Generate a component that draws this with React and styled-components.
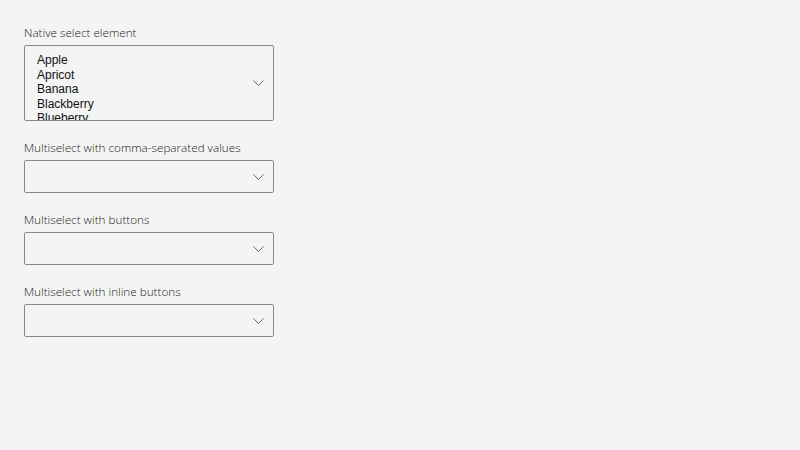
import React from "react";
import styled, { createGlobalStyle } from "styled-components";

const Global = createGlobalStyle`
  html, body { margin: 0; padding: 0; background: #f4f4f4; }
  body { font-family: "Open Sans", "Liberation Sans", sans-serif; }
`;

const Page = styled.div`
  display: flex;
  flex-direction: column;
  gap: 20px;
  padding: 26px 24px;
  width: 250px;
`;

const Field = styled.div`
  display: flex;
  flex-direction: column;
  gap: 6px;
`;

const Label = styled.label`
  font-family: "Open Sans", sans-serif;
  font-weight: 300;
  font-size: 11.7px;
  line-height: 13px;
  color: #1a1a1a;
`;

const Box = styled.div`
  position: relative;
  box-sizing: border-box;
  height: ${(p) => p.$h}px;
  border: 1px solid #8a8a8a;
  border-radius: 2px;
  background: #f4f4f4;
  overflow: hidden;
`;

const Options = styled.div`
  padding: 7px 12px 0;
  font-family: "Liberation Sans", Arial, sans-serif;
  font-size: 12px;
  line-height: 14.5px;
  color: #111;
`;

const Chevron = styled.svg`
  position: absolute;
  right: 9px;
  top: 50%;
  margin-top: -3px;
`;

const Arrow = () => (
  <Chevron width="11" height="6" viewBox="0 0 11 6">
    <path d="M0.5 0.5 L5.5 5.5 L10.5 0.5" fill="none" stroke="#666" strokeWidth="1" />
  </Chevron>
);

const fruits = ["Apple", "Apricot", "Banana", "Blackberry", "Blueberry", "Cherry"];

export default function App() {
  return (
    <>
      <Global />
      <Page>
        <Field>
          <Label>Native select element</Label>
          <Box $h={76}>
            <Options>
              {fruits.map((f) => (
                <div key={f}>{f}</div>
              ))}
            </Options>
            <Arrow />
          </Box>
        </Field>
        <Field>
          <Label>Multiselect with comma-separated values</Label>
          <Box $h={33}>
            <Arrow />
          </Box>
        </Field>
        <Field>
          <Label>Multiselect with buttons</Label>
          <Box $h={33}>
            <Arrow />
          </Box>
        </Field>
        <Field>
          <Label>Multiselect with inline buttons</Label>
          <Box $h={33}>
            <Arrow />
          </Box>
        </Field>
      </Page>
    </>
  );
}
